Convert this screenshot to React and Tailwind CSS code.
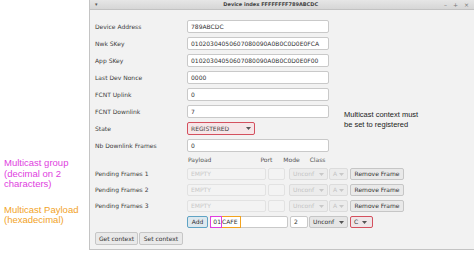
import React from 'react';

const Caret = ({ className = 'text-[#555]' }) => (
  <svg width="5" height="3" viewBox="0 0 5 3" className={className}>
    <path d="M0 0h5L2.5 3z" fill="currentColor" />
  </svg>
);

function Field({ value, className = 'w-[142px]' }) {
  return (
    <div className={`col-start-2 h-[13px] ${className} bg-white border border-[#c9c9c9] rounded-[2px] flex items-center px-[3px] text-[#333]`}>
      {value}
    </div>
  );
}

function DisabledSelect({ label, className }) {
  return (
    <div className={`h-[12px] ${className} bg-[#ececec] border border-[#dcdcdc] rounded-[2px] flex items-center justify-between px-[3px] text-[#c4c4c4]`}>
      <span>{label}</span>
      <Caret className="text-[#c8c8c8]" />
    </div>
  );
}

function PendingRow({ n }) {
  return (
    <div className="flex items-center h-[12px]">
      <div className="w-[92px] text-[#3c3c3c]">Pending Frames {n}</div>
      <div className="h-[12px] w-[79px] bg-[#f3f3f3] border border-[#e2e2e2] rounded-[2px] flex items-center px-[3px] text-[#c8c8c8]">EMPTY</div>
      <div className="ml-[2px] h-[12px] w-[17px] bg-[#f3f3f3] border border-[#e2e2e2] rounded-[2px]" />
      <DisabledSelect label="Unconf" className="ml-[4px] w-[39px]" />
      <DisabledSelect label="A" className="ml-[1px] w-[19px]" />
      <button className="ml-[2px] h-[12px] w-[54px] bg-[#e9e9e9] border border-[#c6c6c6] rounded-[2px] text-[#333] leading-none">Remove Frame</button>
    </div>
  );
}

export default function App() {
  const rows = [
    ['Device Address', '789ABCDC'],
    ['Nwk SKey', '01020304050607080090A0B0C0D0E0FCA'],
    ['App SKey', '01020304050607080090A0B0C0D0E0F00'],
    ['Last Dev Nonce', '0000'],
    ['FCNT Uplink', '0'],
    ['FCNT Downlink', '7'],
  ];

  return (
    <div className="w-[474px] h-[266px] bg-white flex overflow-hidden">
      <div className="w-[89px] shrink-0 pl-[4px] pt-[158px] text-[9.5px] leading-[10.5px]" style={{ fontFamily: '"Liberation Sans", Arial, sans-serif' }}>
        <div className="text-[#e03ee0]">
          Multicast group<br />(decimal on 2<br />characters)
        </div>
        <div className="mt-[15px] text-[#f2a31f]">
          Multicast Payload<br />(hexadecimal)
        </div>
      </div>

      <div className="w-[385px] h-[250px] flex flex-col bg-[#f2f2f2] border-b border-l border-[#c4c4c4] text-[6px] leading-none" style={{ fontFamily: '"DejaVu Sans", sans-serif' }}>
        <div className="h-[10px] shrink-0 bg-gradient-to-b from-[#e6e6e6] to-[#d6d6d6] border-b border-[#c2c2c2] flex items-center px-[5px] text-[#555]">
          <span className="text-[5px]">▾</span>
          <span className="flex-1 text-center font-bold text-[5px] text-[#444]">Device index FFFFFFFF789ABCDC</span>
          <span className="flex gap-[6px] text-[6px] text-[#777]">
            <span>–</span><span>+</span><span>×</span>
          </span>
        </div>

        <div className="flex flex-col pl-[5px] pt-[10px]">
          <div className="grid grid-cols-[92px_142px_1fr] auto-rows-[13px] gap-y-[4px] items-center">
            <div className="col-start-3 row-start-6 row-span-2 self-center pl-[15px] text-[7.5px] leading-[10px] text-[#222]" style={{ fontFamily: '"Liberation Sans", Arial, sans-serif' }}>
              Multicast context must<br />be set to registered
            </div>
            {rows.map(([label, value]) => (
              <React.Fragment key={label}>
                <div className="col-start-1 text-[#3c3c3c]">{label}</div>
                <Field value={value} />
              </React.Fragment>
            ))}
            <div className="col-start-1 text-[#3c3c3c]">State</div>
            <div className="col-start-2 h-[13px] w-[68px] bg-[#f6e6e8] border border-[#d4505e] rounded-[2px] flex items-center justify-between px-[3px] text-[#444]">
              <span>REGISTERED</span>
              <Caret />
            </div>
            <div className="col-start-1 text-[#3c3c3c]">Nb Downlink Frames</div>
            <Field value="0" />
          </div>

          <div className="mt-[4px] h-[8px] flex items-center text-[#555]">
            <span className="ml-[93px]">Payload</span>
            <span className="ml-[49px]">Port</span>
            <span className="ml-[11px]">Mode</span>
            <span className="ml-[10px]">Class</span>
          </div>

          <div className="mt-[4px] flex flex-col gap-[4px]">
            <PendingRow n={1} />
            <PendingRow n={2} />
            <PendingRow n={3} />
            <div className="flex items-center h-[12px]">
              <button className="ml-[92px] h-[12px] w-[21px] bg-[#dde8ee] border border-[#5fa3c4] rounded-[2px] text-[#333] leading-none">Add</button>
              <div className="ml-[2px] h-[12px] w-[78px] bg-white border border-[#c9c9c9] rounded-[2px] flex items-center text-[#333]">
                <span className="-ml-px h-[12px] w-[12px] border border-[#e040e0] flex items-center justify-end">01</span>
                <span className="h-[12px] w-[19px] border border-[#f2a31f] border-l-0 flex items-center">CAFE</span>
              </div>
              <div className="ml-[2px] h-[12px] w-[18px] bg-white border border-[#c9c9c9] rounded-[2px] flex items-center px-[3px] text-[#333]">2</div>
              <div className="ml-[1px] h-[12px] w-[39px] bg-[#e6e6e6] border border-[#c6c6c6] rounded-[2px] flex items-center justify-between px-[3px] text-[#333]">
                <span>Unconf</span>
                <Caret />
              </div>
              <div className="ml-[2px] h-[12px] w-[23px] bg-[#eee6e8] border border-[#d4505e] rounded-[2px] flex items-center gap-[4px] px-[3px] text-[#333]">
                <span>C</span>
                <Caret />
              </div>
            </div>
          </div>

          <div className="mt-[4px] flex h-[13px]">
            <button className="h-[13px] w-[43px] bg-[#e9e9e9] border border-[#c6c6c6] rounded-[2px] text-[#333] leading-none">Get context</button>
            <button className="ml-[1px] h-[13px] w-[44px] bg-[#e9e9e9] border border-[#c6c6c6] rounded-[2px] text-[#333] leading-none">Set context</button>
          </div>
        </div>
      </div>
    </div>
  );
}
